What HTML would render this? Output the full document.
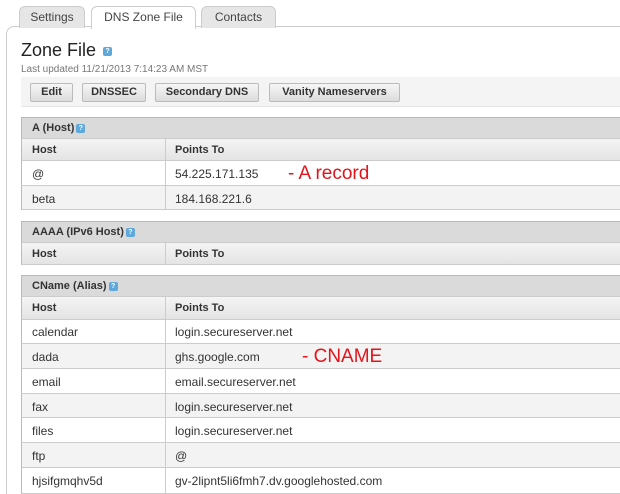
<!DOCTYPE html>
<html><head><style>
*{margin:0;padding:0;box-sizing:border-box}
html,body{width:620px;height:494px;overflow:hidden}
body{background:#fff;font-family:"Liberation Sans",Arial,sans-serif;position:relative;color:#333}
.a{position:absolute}
.tab{position:absolute;top:6px;height:22px;border:1px solid #ccc;border-bottom:none;border-radius:6px 6px 0 0;background:#e6e6e6;font-size:12px;color:#444;text-align:center;line-height:20px}
.q{display:inline-block;width:9px;height:9px;background:#5fa8dc;border-radius:2px;color:#fff;font-size:7px;line-height:9px;text-align:center;font-weight:bold;vertical-align:middle;margin-left:2px}
.btn{position:absolute;top:83px;height:19px;border:1px solid #bbb;border-radius:2px;background:linear-gradient(#f6f6f6,#dcdcdc);font-size:11px;font-weight:bold;color:#333;text-align:center;line-height:17px}
.row{position:absolute;left:21px;right:0;border-left:1px solid #bbb;border-bottom:1px solid #ccc;font-size:12px}
.row .t{position:absolute;top:0}
.row .c1{left:10px}.row .c2{left:153px}
.row .div{position:absolute;left:143px;top:0;bottom:0;border-left:1px solid #ccc}
.sec{background:#dadada;font-weight:bold;font-size:11px;color:#333;border-top:1px solid #bbb}
.hd{background:linear-gradient(#f4f4f4,#e4e4e4);font-weight:bold;font-size:11px}
.g{background:#f3f3f3}
.red{position:absolute;color:#e4141b;font-size:19px}
</style></head><body>
<div class="a" style="left:6px;top:26px;width:620px;height:480px;border:1px solid #ccc;border-radius:8px 0 0 0"></div>
<div class="tab" style="left:19px;width:66px">Settings</div>
<div class="tab" style="left:91px;width:105px;background:#fff;height:23px">DNS Zone File</div>
<div class="tab" style="left:201px;width:75px">Contacts</div>
<div class="a" style="left:21px;top:40px;font-size:18px;color:#222">Zone File <span class="q">?</span></div>
<div class="a" style="left:21px;top:64px;font-size:10px;color:#777">Last updated 11/21/2013 7:14:23 AM MST</div>
<div class="a" style="left:21px;top:77px;width:600px;height:30px;background:#f4f4f4;border-bottom:1px solid #e4e4e4"></div>
<div class="btn" style="left:30px;width:43px">Edit</div>
<div class="btn" style="left:82px;width:64px">DNSSEC</div>
<div class="btn" style="left:155px;width:104px">Secondary DNS</div>
<div class="btn" style="left:269px;width:131px">Vanity Nameservers</div>

<div class="row sec" style="top:117px;height:22px"><span class="t c1" style="top:4px">A (Host)<span class="q">?</span></span></div>
<div class="row hd" style="top:139px;height:22px"><div class="div"></div><span class="t c1" style="top:5px">Host</span><span class="t c2" style="top:5px">Points To</span></div>
<div class="row" style="top:161px;height:25px"><div class="div"></div><span class="t c1" style="top:6px">@</span><span class="t c2" style="top:6px">54.225.171.135</span></div>
<div class="row g" style="top:186px;height:24px"><div class="div"></div><span class="t c1" style="top:6px">beta</span><span class="t c2" style="top:6px">184.168.221.6</span></div>
<div class="red" style="left:288px;top:163px">- A record</div>

<div class="row sec" style="top:221px;height:22px"><span class="t c1" style="top:4px">AAAA (IPv6 Host)<span class="q">?</span></span></div>
<div class="row hd" style="top:243px;height:22px"><div class="div"></div><span class="t c1" style="top:5px">Host</span><span class="t c2" style="top:5px">Points To</span></div>

<div class="row sec" style="top:275px;height:22px"><span class="t c1" style="top:4px">CName (Alias)<span class="q">?</span></span></div>
<div class="row hd" style="top:297px;height:23px"><div class="div"></div><span class="t c1" style="top:5px">Host</span><span class="t c2" style="top:5px">Points To</span></div>
<div class="row" style="top:320px;height:24px"><div class="div"></div><span class="t c1" style="top:5px">calendar</span><span class="t c2" style="top:5px">login.secureserver.net</span></div>
<div class="row g" style="top:344px;height:25px"><div class="div"></div><span class="t c1" style="top:6px">dada</span><span class="t c2" style="top:6px">ghs.google.com</span></div>
<div class="row" style="top:369px;height:25px"><div class="div"></div><span class="t c1" style="top:6px">email</span><span class="t c2" style="top:6px">email.secureserver.net</span></div>
<div class="row g" style="top:394px;height:24px"><div class="div"></div><span class="t c1" style="top:6px">fax</span><span class="t c2" style="top:6px">login.secureserver.net</span></div>
<div class="row" style="top:418px;height:25px"><div class="div"></div><span class="t c1" style="top:6px">files</span><span class="t c2" style="top:6px">login.secureserver.net</span></div>
<div class="row g" style="top:443px;height:25px"><div class="div"></div><span class="t c1" style="top:6px">ftp</span><span class="t c2" style="top:6px">@</span></div>
<div class="row" style="top:468px;height:26px"><div class="div"></div><span class="t c1" style="top:6px">hjsifgmqhv5d</span><span class="t c2" style="top:6px">gv-2lipnt5li6fmh7.dv.googlehosted.com</span></div>
<div class="red" style="left:302px;top:346px">- CNAME</div>
</body></html>
